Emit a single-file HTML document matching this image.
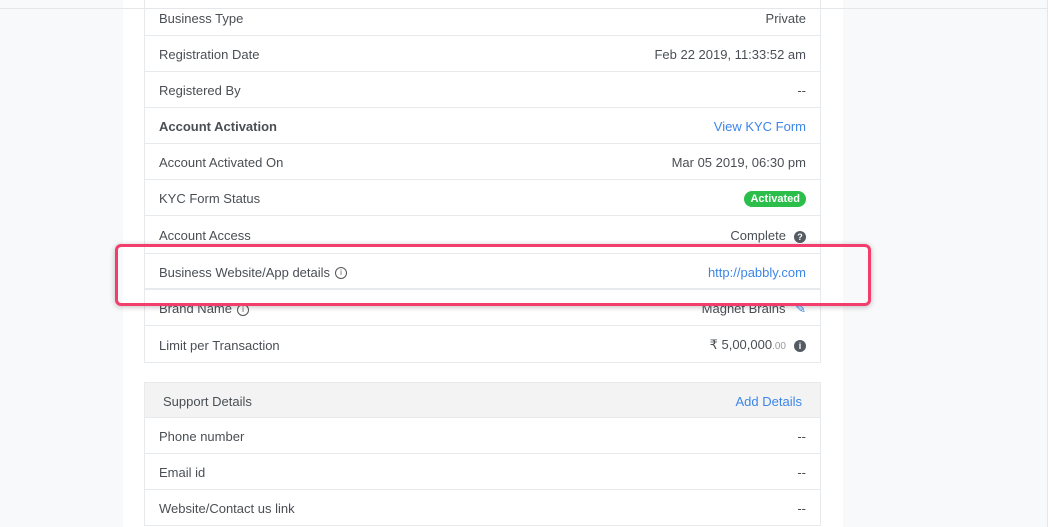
<!DOCTYPE html>
<html><head><style>
body{margin:0;width:1058px;height:527px;overflow:hidden;background:#f8f9fb;font-family:"Liberation Sans",sans-serif;font-size:13px;color:#4a4f55;position:relative}
.topline{position:absolute;left:0;top:8px;width:1047px;height:1px;background:#e4e6e9}
.main{position:absolute;left:123px;top:0;width:720px;height:527px;background:#fff}
.sb{position:absolute;left:1047px;top:0;width:11px;height:527px;background:#fff;border-left:1px solid #e6e6e6}
.r{position:absolute;left:144px;width:677px;border:1px solid #e6eaed;border-top:none;display:flex;align-items:center;justify-content:space-between;padding:2px 14px 0 14px;box-sizing:border-box;height:36px}
.b{font-weight:bold}
.lk{color:#3d86e8}
.badge{background:#2bbe4a;color:#fff;font-weight:bold;font-size:11px;border-radius:9px;padding:2px 6px}
.ic{display:inline-block;width:12px;height:12px;border-radius:50%;background:#555b62;color:#fff;font-size:9px;font-weight:bold;text-align:center;line-height:12px;margin-left:8px;vertical-align:middle}
.io{display:inline-block;width:10px;height:10px;border-radius:50%;border:1px solid #555;color:#555;font-size:8px;text-align:center;line-height:10px;margin-left:5px;vertical-align:middle}
.hl{position:absolute;left:115px;top:244px;width:750px;height:56px;border:3px solid #f23d6d;border-radius:6px;box-shadow:0 1px 6px rgba(0,0,0,.25)}
</style></head><body>
<div class="main"></div>
<div class="topline"></div>
<div class="sb"></div>
<div class="r" style="top:0"><span>Business Type</span><span>Private</span></div>
<div class="r" style="top:36px"><span>Registration Date</span><span>Feb 22 2019, 11:33:52 am</span></div>
<div class="r" style="top:72px"><span>Registered By</span><span>--</span></div>
<div class="r" style="top:108px"><span class="b">Account Activation</span><span class="lk">View KYC Form</span></div>
<div class="r" style="top:144px"><span>Account Activated On</span><span>Mar 05 2019, 06:30 pm</span></div>
<div class="r" style="top:180px"><span>KYC Form Status</span><span class="badge">Activated</span></div>
<div class="r" style="top:216px;height:38px"><span>Account Access</span><span>Complete<span class="ic">?</span></span></div>
<div class="r" style="top:254px;border-bottom-width:2px"><span>Business Website/App details<span class="io">i</span></span><span class="lk">http://pabbly.com</span></div>
<div class="r" style="top:290px"><span>Brand Name<span class="io">i</span></span><span>Magnet Brains <span style="color:#3d86e8;margin-left:6px">&#9998;</span></span></div>
<div class="r" style="top:326px;height:37px"><span>Limit per Transaction</span><span>₹ 5,00,000<small style="color:#999;font-size:10px">.00</small><span class="ic">i</span></span></div>
<div class="r" style="top:382px;background:#f3f3f3;border-top:1px solid #e6eaed;padding:2px 18px 0"><span>Support Details</span><span class="lk">Add Details</span></div>
<div class="r" style="top:418px"><span>Phone number</span><span>--</span></div>
<div class="r" style="top:454px"><span>Email id</span><span>--</span></div>
<div class="r" style="top:490px"><span>Website/Contact us link</span><span>--</span></div>
<div class="hl"></div>
</body></html>
